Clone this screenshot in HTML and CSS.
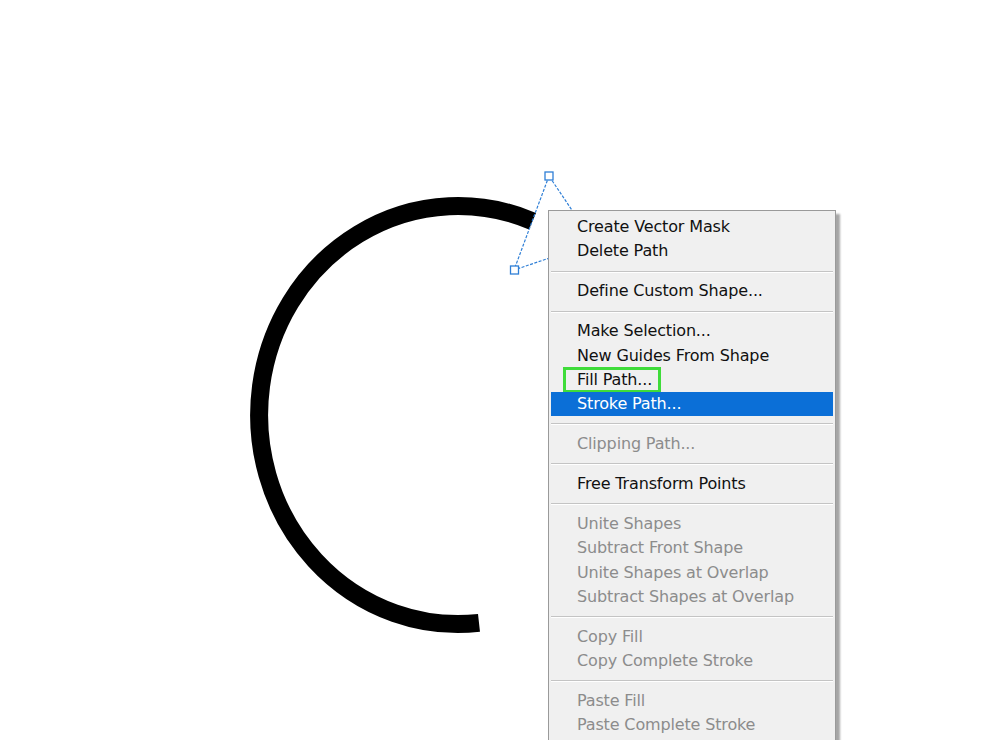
FILE: index.html
```html
<!DOCTYPE html>
<html>
<head>
<meta charset="utf-8">
<link rel="stylesheet" href="styles.css">
</head>
<body>
<div class="canvas">
  <svg class="art" width="1000" height="740" viewBox="0 0 1000 740">
    <path class="arc" d="M 532.5 221.2 A 199 209 0 1 0 479 622.9"/>
    <polyline class="guide" points="594,243 549,176 514,270 594,243"/>
    <rect class="anchor" x="545" y="172" width="8" height="8"/>
    <rect class="anchor" x="510.5" y="266" width="8" height="8"/>
  </svg>
  <div class="menu">
    <div class="item">Create Vector Mask</div>
    <div class="item">Delete Path</div>
    <div class="sep"></div>
    <div class="item">Define Custom Shape...</div>
    <div class="sep"></div>
    <div class="item">Make Selection...</div>
    <div class="item">New Guides From Shape</div>
    <div class="item marked">Fill Path...</div>
    <div class="item active">Stroke Path...</div>
    <div class="sep"></div>
    <div class="item off">Clipping Path...</div>
    <div class="sep"></div>
    <div class="item">Free Transform Points</div>
    <div class="sep"></div>
    <div class="item off">Unite Shapes</div>
    <div class="item off">Subtract Front Shape</div>
    <div class="item off">Unite Shapes at Overlap</div>
    <div class="item off">Subtract Shapes at Overlap</div>
    <div class="sep"></div>
    <div class="item off">Copy Fill</div>
    <div class="item off">Copy Complete Stroke</div>
    <div class="sep"></div>
    <div class="item off">Paste Fill</div>
    <div class="item off">Paste Complete Stroke</div>
  </div>
</div>
</body>
</html>
```
FILE: styles.css
```css
html, body {
  margin: 0;
  padding: 0;
  background: #fff;
  overflow: hidden;
  height: 740px;
}
.canvas {
  position: relative;
  width: 1000px;
  height: 740px;
  overflow: hidden;
}
.art {
  display: block;
}
.arc {
  fill: none;
  stroke: #000;
  stroke-width: 18;
  stroke-linecap: butt;
}
.guide {
  fill: none;
  stroke: #2f7fd6;
  stroke-width: 1.2;
  stroke-dasharray: 3 1.5;
}
.anchor {
  fill: #fff;
  stroke: #2f7fd6;
  stroke-width: 1.3;
}
.menu {
  position: absolute;
  left: 548px;
  top: 210px;
  width: 282px;
  padding: 4px 2px 20px;
  background: #f0f0f0;
  border: 1px solid #9a9a9a;
  box-shadow: 4px 4px 2px rgba(0, 0, 0, 0.35);
  font-family: "DejaVu Sans", sans-serif;
  font-size: 16px;
  letter-spacing: -0.15px;
  color: #111;
}
.item {
  position: relative;
  height: 24.25px;
  line-height: 24.25px;
  padding-left: 26px;
  white-space: nowrap;
}
.item.off {
  color: #8c8c8c;
}
.item.active {
  background: #0b6fd7;
  color: #fff;
}
.sep {
  height: 0;
  margin: 7px 0 6.75px;
  border-top: 1px solid #c4c4c4;
  border-bottom: 1px solid #fff;
}
.item.marked::after {
  content: "";
  position: absolute;
  left: 12px;
  top: -1px;
  width: 98px;
  height: 26px;
  box-sizing: border-box;
  border: 3px solid #3fdc3a;
}
```
